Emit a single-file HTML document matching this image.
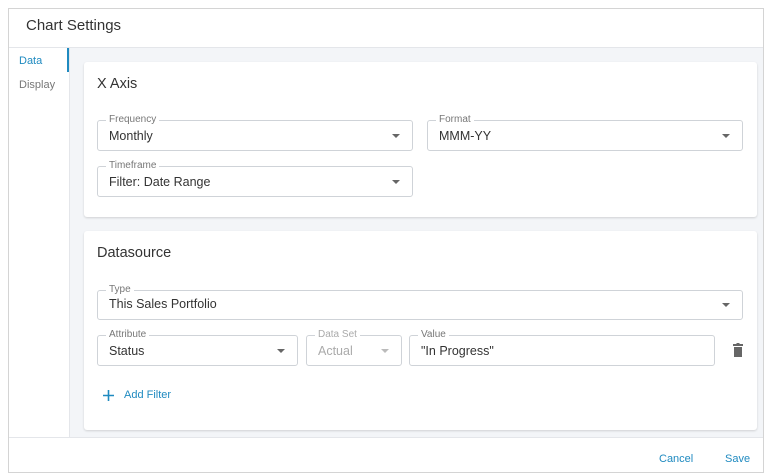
<!DOCTYPE html><html><head><style>
*{box-sizing:border-box;margin:0;padding:0}
body{width:768px;height:476px;background:#fff;font-family:"Liberation Sans",sans-serif;position:relative;overflow:hidden}
.a{position:absolute}
.f{position:absolute;border:1px solid #cfd3d8;border-radius:3px;background:#fff}
.f .l{position:absolute;top:-7px;left:8px;background:#fff;padding:0 3px;font-size:10px;color:#777;line-height:12px}
.f .v{position:absolute;left:11px;top:8px;font-size:12.5px;color:#333}
.f .c{position:absolute;right:12px;top:13px;width:0;height:0;border-left:4px solid transparent;border-right:4px solid transparent;border-top:4px solid #666}
.card{position:absolute;background:#fff;border-radius:3px;box-shadow:0 1px 2px rgba(0,0,0,.15)}
.h{position:absolute;font-size:14.5px;color:#333}
</style></head><body>
<div class="a" style="left:8px;top:8px;width:756px;height:465px;border:1px solid #d4d4d4"></div>
<div class="a" style="left:26px;top:17px;font-size:15px;color:#333">Chart Settings</div>
<div class="a" style="left:9px;top:47px;width:754px;height:1px;background:#e4e6ea"></div>
<div class="a" style="left:70px;top:48px;width:693px;height:389px;background:#f3f5f8"></div>
<div class="a" style="left:69px;top:48px;width:1px;height:389px;background:#e4e6ea"></div>
<div class="a" style="left:67px;top:48px;width:2px;height:24px;background:#1f8ac0"></div>
<div class="a" style="left:19px;top:55px;font-size:11px;color:#1f8ac0">Data</div>
<div class="a" style="left:19px;top:79px;font-size:11px;color:#777">Display</div>
<div class="a" style="left:9px;top:437px;width:754px;height:1px;background:#e4e6ea"></div>

<div class="card" style="left:84px;top:62px;width:673px;height:155px"></div>
<div class="h" style="left:97px;top:76px">X Axis</div>
<div class="f" style="left:97px;top:120px;width:316px;height:31px"><span class="l">Frequency</span><span class="v">Monthly</span><span class="c"></span></div>
<div class="f" style="left:427px;top:120px;width:316px;height:31px"><span class="l">Format</span><span class="v">MMM-YY</span><span class="c"></span></div>
<div class="f" style="left:97px;top:166px;width:316px;height:31px"><span class="l">Timeframe</span><span class="v">Filter: Date Range</span><span class="c"></span></div>

<div class="card" style="left:84px;top:231px;width:673px;height:199px"></div>
<div class="h" style="left:97px;top:245px">Datasource</div>
<div class="f" style="left:97px;top:290px;width:646px;height:30px"><span class="l">Type</span><span class="v" style="top:6px">This Sales Portfolio</span><span class="c" style="top:12px"></span></div>
<div class="f" style="left:97px;top:335px;width:201px;height:31px"><span class="l">Attribute</span><span class="v">Status</span><span class="c"></span></div>
<div class="f" style="left:306px;top:335px;width:96px;height:31px"><span class="l" style="color:#aaa">Data Set</span><span class="v" style="color:#aaa">Actual</span><span class="c" style="border-top-color:#bbb"></span></div>
<div class="f" style="left:409px;top:335px;width:306px;height:31px"><span class="l">Value</span><span class="v">"In Progress"</span></div>
<svg class="a" style="left:731px;top:342px" width="14" height="16" viewBox="0 0 14 16"><path d="M2 2h3l1-1h2l1 1h3v2H2z M3 5h8v10H3z" fill="#666"/></svg>
<svg class="a" style="left:103px;top:390px" width="11" height="11" viewBox="0 0 11 11"><path d="M5.5 0v11M0 5.5h11" stroke="#1f8ac0" stroke-width="1.6"/></svg>
<div class="a" style="left:124px;top:389px;font-size:11px;color:#1f8ac0">Add Filter</div>

<div class="a" style="left:659px;top:453px;font-size:11px;color:#1f8ac0">Cancel</div>
<div class="a" style="left:725px;top:453px;font-size:11px;color:#1f8ac0">Save</div>
</body></html>
